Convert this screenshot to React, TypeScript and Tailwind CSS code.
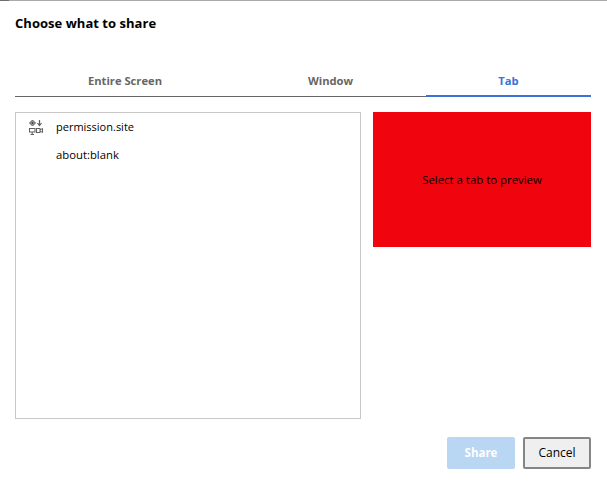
export default function App() {
  const font = { fontFamily: '"Open Sans", "Noto Sans", sans-serif' };

  return (
    <div style={font} className="flex h-[485px] w-[607px] flex-col bg-white text-[11px] text-black">
      {/* window edge */}
      <div className="flex h-[1px] shrink-0">
        <div className="w-[9px] bg-[#6e6e6e]" />
        <div className="flex-1 bg-[#a9a9a9]" />
      </div>

      <div className="flex flex-1 flex-col pr-[16px] pl-[15px]">
        <h1 className="mt-[13px] h-[18px] text-[13px] leading-[18px] font-bold tracking-[0.03px]">
          Choose what to share
        </h1>

        {/* tabs */}
        <div className="mt-[34px] flex h-[31px] border-b border-[#666666] text-[11.2px] font-bold text-[#666666]">
          <div className="flex w-[220px] items-start justify-center pt-[7px]">Entire Screen</div>
          <div className="flex w-[191px] items-start justify-center pt-[7px]">Window</div>
          <div className="-mb-px flex w-[165px] items-start justify-center border-b-2 border-[#3b72d9] pt-[7px] text-[#3b72d9]">
            Tab
          </div>
        </div>

        <div className="mt-[15px] flex gap-[12px]">
          {/* tab list */}
          <div className="h-[307px] w-[346px] border border-[#c8c8c8]">
            <div className="flex h-[28px] items-center">
              <div className="flex w-[40px] justify-center pr-[1px]">
                <svg width="15" height="16" viewBox="0 0 15 16" fill="none" stroke="#5f5f5f" strokeWidth="1">
                  <path d="M4.5 1 7.5 4 4.5 7 1.5 4Z" fill="#9a9a9a" />
                  <path d="M4.5 3v2M3.5 4h2" stroke="#4a4a4a" />
                  <path d="M11.5 1v5M9.5 4l2 2.5 2-2.5" strokeWidth="1.2" />
                  <rect x="1.5" y="9.5" width="5.5" height="3.5" />
                  <path d="M4.2 13v2M2.5 15.5h3.5" />
                  <rect x="8.5" y="9.5" width="3.5" height="4" />
                  <path d="M12 11 14.5 9.5v4L12 12" />
                </svg>
              </div>
              <span>permission.site</span>
            </div>
            <div className="flex h-[28px] items-center pl-[40px] text-[11.3px]">about:blank</div>
          </div>

          {/* preview */}
          <div className="flex h-[135px] w-[218px] items-center justify-center bg-[#f0050f] text-[11.4px]">
            Select a tab to preview
          </div>
        </div>

        <div className="mt-[18px] flex justify-end gap-[8px] text-[12px]">
          <button className="h-[32px] w-[68px] rounded-[2px] bg-[#b9d6f2] text-[11.5px] font-bold text-white">
            Share
          </button>
          <button className="h-[32px] w-[68px] rounded-[2px] border-2 border-[#858585] bg-[#efefef] text-black">
            Cancel
          </button>
        </div>
      </div>
    </div>
  );
}
